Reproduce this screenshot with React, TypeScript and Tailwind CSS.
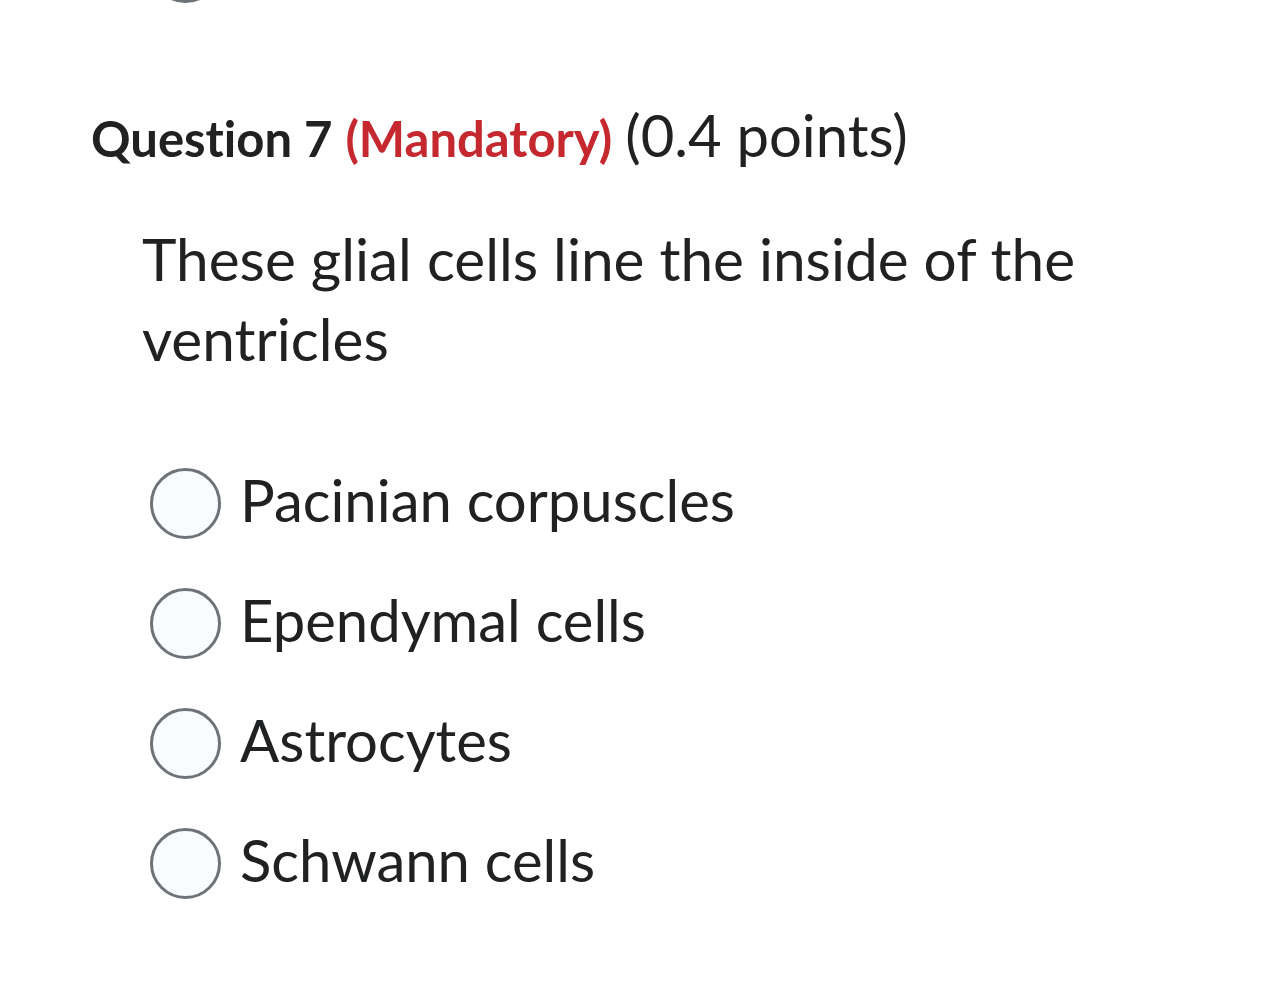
import React from "react";

const options = ["Pacinian corpuscles", "Ependymal cells", "Astrocytes", "Schwann cells"];

function Radio() {
  return (
    <span className="block w-[71px] h-[71px] shrink-0 rounded-full border-[3px] border-[#6e7377] bg-[#f9fbff]" />
  );
}

export default function App() {
  return (
    <div className="relative w-[1284px] h-[1001px] overflow-hidden bg-white text-[#202122] [font-variant-ligatures:none]" style={{ fontFamily: "Lato, 'Noto Sans', sans-serif" }}>
      <div className="absolute left-[150px] top-[-68px]">
        <Radio />
      </div>
      <div className="pl-[91px] pt-[100px]">
        <h2 className="flex items-baseline gap-[13px] leading-[70px]">
          <span className="text-[49px] font-bold">Question 7</span>
          <span className="text-[49px] font-bold text-[#c5282f]">(Mandatory)</span>
          <span className="text-[58px] font-normal">(0.4 points)</span>
        </h2>
        <div className="pl-[51px] mt-[45px] text-[58.5px] leading-[80px] w-[1000px]">
          These glial cells line the inside of the ventricles
        </div>
        <div className="mt-[90px] pl-[59px] flex flex-col gap-[49px]">
          {options.map((o) => (
            <label key={o} className="flex items-center gap-[19px] h-[71px]">
              <Radio />
              <span className="text-[58px] leading-[71px] -translate-y-[4px]">{o}</span>
            </label>
          ))}
        </div>
      </div>
    </div>
  );
}
